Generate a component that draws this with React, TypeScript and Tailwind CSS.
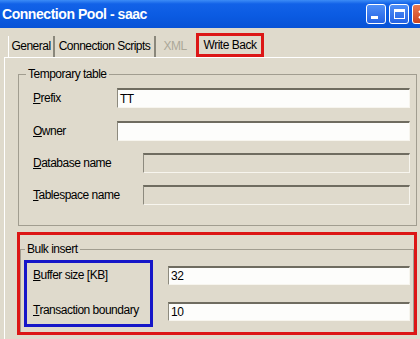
import React from 'react'

function Mnemonic({ first, rest }: { first: string; rest: string }) {
  return (
    <span>
      <span className="underline underline-offset-[1px]">{first}</span>
      {rest}
    </span>
  )
}

function TitleBar() {
  return (
    <div className="flex h-[28px] shrink-0 items-center bg-[linear-gradient(to_bottom,#3c8cf6_0%,#1262e8_14%,#0b5be2_55%,#0752d6_100%)] pl-[2px]">
      <span className="text-[14px] font-bold tracking-[-0.45px] text-white">Connection Pool - saac</span>
      <div className="ml-auto mr-[-13px] flex items-center gap-[3px]">
        <div className="flex h-[20px] w-[20px] items-end rounded-[3px] border border-white bg-[linear-gradient(to_bottom,#4f8ff7,#2563e4)] pb-[4px] pl-[4px]">
          <div className="h-[3px] w-[7px] bg-white" />
        </div>
        <div className="flex h-[20px] w-[20px] items-center justify-center rounded-[3px] border border-white bg-[linear-gradient(to_bottom,#4f8ff7,#2563e4)]">
          <div className="h-[10px] w-[11px] border border-t-[3px] border-white" />
        </div>
        <div className="flex h-[20px] w-[21px] items-center justify-center rounded-[3px] border border-white bg-[linear-gradient(to_bottom,#e87850,#cc4420)]">
          <svg width="11" height="11" viewBox="0 0 11 11">
            <path d="M2 2 L9 9 M9 2 L2 9" stroke="#fff" strokeWidth="2" />
          </svg>
        </div>
      </div>
    </div>
  )
}

function Tabs() {
  return (
    <div className="flex h-[29px] shrink-0 items-end pl-[8px]">
      <div className="flex h-[21px] w-[47px] items-center justify-center border-l border-r-2 border-l-white border-r-[#8a877b] pb-[2px]">
        General
      </div>
      <div className="flex h-[21px] w-[101px] items-center justify-center border-r-2 border-r-[#8a877b] pb-[2px]">
        Connection Scripts
      </div>
      <div className="flex h-[21px] w-[38px] items-center justify-center pb-[2px] text-[#aca899]">XML</div>
      <div className="ml-[2px] flex h-[24px] w-[68px] items-center justify-center border-[3px] border-[#dc1616] pb-[1px]">
        Write Back
      </div>
    </div>
  )
}

function Field({
  first,
  rest,
  labelW,
  value,
  disabled,
}: {
  first: string
  rest: string
  labelW: string
  value?: string
  disabled?: boolean
}) {
  return (
    <div className="flex h-[20px] items-center">
      <div className={labelW}>
        <Mnemonic first={first} rest={rest} />
      </div>
      <div
        className={
          'flex h-[20px] flex-1 items-center border border-t-2 border-[#f7f5ee] border-t-[#6f6c60] border-l-[#8d8a7e] pl-[2px] ' +
          (disabled ? 'bg-[#dfdacc]' : 'bg-[#fdfdfb]')
        }
      >
        {value}
      </div>
    </div>
  )
}

export default function App() {
  return (
    <div className="flex h-[339px] w-[420px] flex-col overflow-hidden bg-[#dfdacc] font-['Liberation_Sans',Arial,sans-serif] text-[12px] leading-[14px] tracking-[-0.5px] text-black">
      <TitleBar />
      <Tabs />

      <div className="ml-[4px] flex-1 border-l border-t border-white pl-[13px] pt-[9px]">
        {/* Temporary table */}
        <fieldset className="h-[159px] w-[399px] border border-[#a19d90]">
          <legend className="ml-[7px] px-[2px]">Temporary table</legend>
          <div className="flex flex-col pl-[14px] pr-[6px]">
            <div className="mt-[7px]">
              <Field first="P" rest="refix" labelW="w-[84px]" value="TT" />
            </div>
            <div className="mt-[13px]">
              <Field first="O" rest="wner" labelW="w-[84px]" />
            </div>
            <div className="mt-[12px]">
              <Field first="D" rest="atabase name" labelW="w-[110px]" disabled />
            </div>
            <div className="mt-[12px]">
              <Field first="T" rest="ablespace name" labelW="w-[110px]" disabled />
            </div>
          </div>
        </fieldset>

        {/* Bulk insert */}
        <div className="ml-[-1px] mt-[6px] h-[103px] w-[400px] border-[3px] border-[#dc1616] pt-[7px]">
          <fieldset className="h-[90px] border border-b-0 border-[#a19d90]">
            <legend className="ml-[4px] px-[2px]">Bulk insert</legend>
            <div className="flex pl-[3px] pr-[3px]">
              <div className="mt-[4px] flex h-[67px] w-[129px] flex-col border-[3px] border-[#1616c8] pl-[6px] pt-[5px]">
                <Mnemonic first="B" rest="uffer size [KB]" />
                <div className="mt-[21px]">
                  <Mnemonic first="T" rest="ransaction boundary" />
                </div>
              </div>
              <div className="ml-[15px] mt-[10px] flex flex-1 flex-col gap-[17px]">
                <div className="flex h-[19px] items-center border border-t-2 border-[#f7f5ee] border-t-[#6f6c60] border-l-[#8d8a7e] bg-[#fdfdfb] pl-[2px]">
                  32
                </div>
                <div className="flex h-[19px] items-center border border-t-2 border-[#f7f5ee] border-t-[#6f6c60] border-l-[#8d8a7e] bg-[#fdfdfb] pl-[2px]">
                  10
                </div>
              </div>
            </div>
          </fieldset>
        </div>
      </div>
    </div>
  )
}
